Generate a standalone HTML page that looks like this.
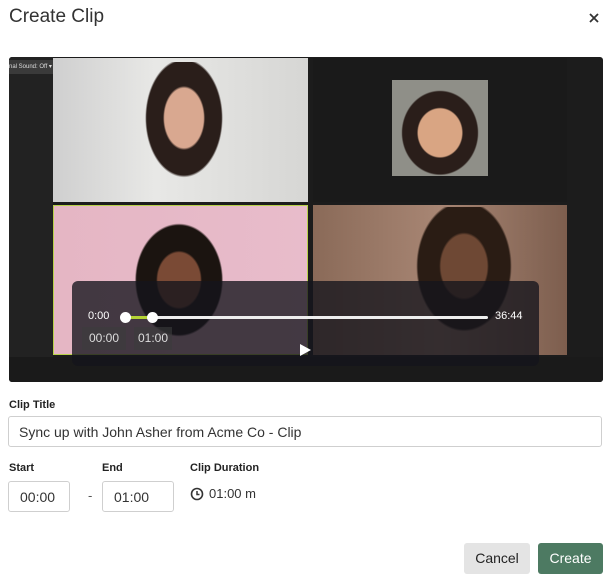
<!DOCTYPE html>
<html><head><style>
body{margin:0;width:613px;height:587px;background:#fff;font-family:"Liberation Sans",sans-serif;position:relative;overflow:hidden;color:#222}
.a{position:absolute}
.lbl{font-size:11px;font-weight:bold;color:#222}
.inp{border:1px solid #cfcfcf;border-radius:3px;background:#fff;font-size:14px;color:#333;box-sizing:border-box}
</style></head><body>
<div class="a" style="left:9px;top:6px;font-size:19px;color:#333">Create Clip</div>
<svg class="a" style="left:589px;top:13px" width="10" height="10"><path d="M1 1L9 9M9 1L1 9" stroke="#333" stroke-width="1.8"/></svg>

<div class="a" style="left:9px;top:57px;width:594px;height:325px;background:#1c1c1c;border-radius:3px;overflow:hidden">
  <div class="a" style="left:0;top:0;width:44px;height:300px;background:#222"></div>
  <div class="a" style="left:0;top:3px;width:62px;height:14px;background:#3a3a3a;font-size:6px;color:#ddd;line-height:14px">nal Sound: Off ▾</div>
  <div class="a" style="left:44px;top:1px;width:255px;height:144px;background:linear-gradient(90deg,#cfcfcf,#e8e8e6 40%,#d6d6d4)"></div>
  <div class="a" style="left:120px;top:5px;width:110px;height:140px;background:radial-gradient(ellipse at 50% 40%,#d9a890 0 25%,#2a1e1a 27% 48%,transparent 50%)"></div>
  <div class="a" style="left:304px;top:1px;width:254px;height:144px;background:#1a1a1a"></div>
  <div class="a" style="left:383px;top:23px;width:96px;height:96px;background:radial-gradient(ellipse at 50% 55%,#d9a583 0 32%,#2a1e1a 34% 55%,#8f8f88 57%)"></div>
  <div class="a" style="left:44px;top:148px;width:255px;height:150px;background:linear-gradient(90deg,#e5b6c4,#e8bccb);border:1px solid #b8d24a;box-sizing:border-box"></div>
  <div class="a" style="left:110px;top:160px;width:120px;height:140px;background:radial-gradient(ellipse at 50% 45%,#7a4a35 0 25%,#1b1410 27% 50%,transparent 52%)"></div>
  <div class="a" style="left:304px;top:148px;width:254px;height:150px;background:linear-gradient(90deg,#8a6a58,#a88674 50%,#7d5e4e)"></div>
  <div class="a" style="left:390px;top:150px;width:130px;height:148px;background:radial-gradient(ellipse at 50% 40%,#6e4834 0 25%,#2a1c14 27% 50%,transparent 52%)"></div>
  <div class="a" style="left:0;top:300px;width:594px;height:25px;background:#1a1a1a"></div>
  <div class="a" style="left:63px;top:224px;width:467px;height:85px;background:rgba(20,20,28,0.78);border-radius:6px"></div>
  <div class="a" style="left:79px;top:253px;font-size:11px;color:#fff">0:00</div>
  <div class="a" style="left:486px;top:253px;font-size:11px;color:#fff">36:44</div>
  <div class="a" style="left:117px;top:259px;width:362px;height:3px;background:#eee;border-radius:2px"></div>
  <div class="a" style="left:117px;top:259px;width:26px;height:3px;background:#b5d335"></div>
  <div class="a" style="left:111px;top:255px;width:11px;height:11px;background:#fff;border-radius:50%"></div>
  <div class="a" style="left:138px;top:255px;width:11px;height:11px;background:#fff;border-radius:50%"></div>
  <div class="a" style="left:73px;top:270px;width:44px;height:23px;background:rgba(60,60,60,.6);font-size:12px;color:#ddd;text-align:center;line-height:23px">00:00</div>
  <div class="a" style="left:125px;top:270px;width:38px;height:23px;background:rgba(60,60,60,.6);font-size:12px;color:#ddd;text-align:center;line-height:23px">01:00</div>
  <svg class="a" style="left:289px;top:286px" width="14" height="14"><path d="M2 1L13 7L2 13Z" fill="#fff"/></svg>
</div>

<div class="a lbl" style="left:9px;top:399px">Clip Title</div>
<div class="a inp" style="left:8px;top:416px;width:594px;height:31px;padding:7px 10px">Sync up with John Asher from Acme Co - Clip</div>
<div class="a lbl" style="left:9px;top:462px">Start</div>
<div class="a lbl" style="left:102px;top:462px">End</div>
<div class="a lbl" style="left:190px;top:462px">Clip Duration</div>
<div class="a inp" style="left:8px;top:481px;width:62px;height:31px;padding:7px 11px">00:00</div>
<div class="a" style="left:88px;top:488px;font-size:13px;color:#555">-</div>
<div class="a inp" style="left:102px;top:481px;width:72px;height:31px;padding:7px 11px">01:00</div>
<svg class="a" style="left:190px;top:487px" width="14" height="14"><circle cx="7" cy="7" r="5.5" fill="none" stroke="#333" stroke-width="1.6"/><path d="M7 4V7.5H9.5" fill="none" stroke="#333" stroke-width="1.5"/></svg>
<div class="a" style="left:209px;top:486px;font-size:13px;color:#333">01:00 m</div>
<div class="a" style="left:464px;top:543px;width:66px;height:31px;background:#e4e4e4;border-radius:3px;font-size:14px;color:#222;text-align:center;line-height:31px">Cancel</div>
<div class="a" style="left:538px;top:543px;width:65px;height:31px;background:#4d7a62;border-radius:3px;font-size:14px;color:#fff;text-align:center;line-height:31px">Create</div>
</body></html>
